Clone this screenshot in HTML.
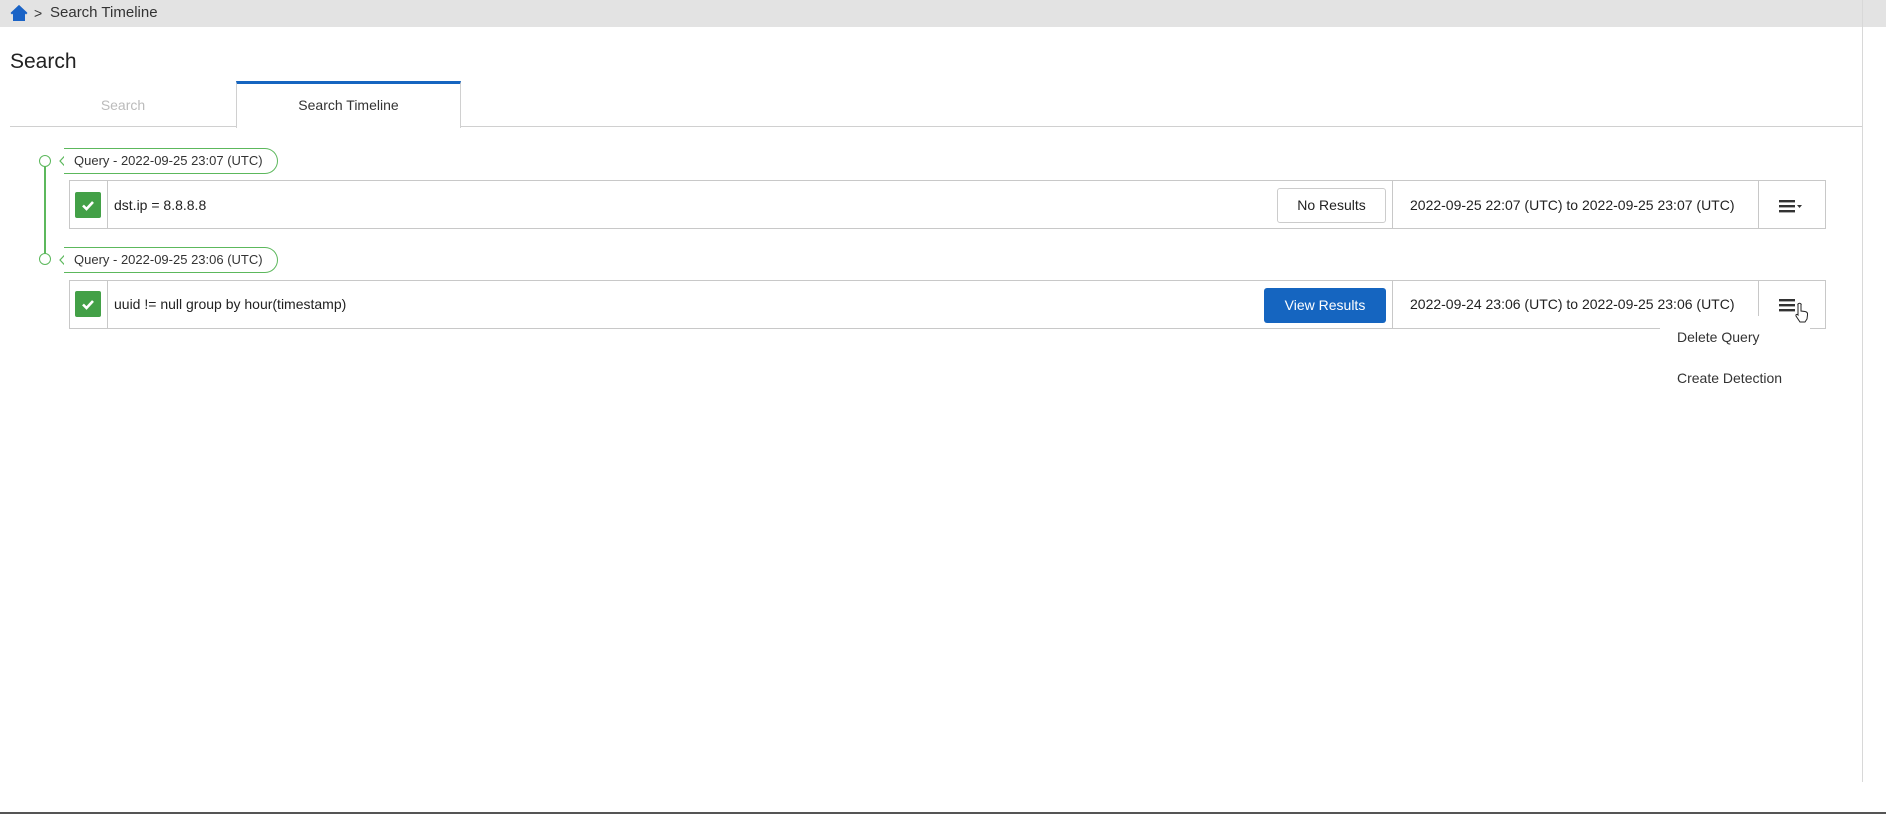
<!DOCTYPE html>
<html><head><meta charset="utf-8"><style>
*{box-sizing:border-box;margin:0;padding:0}
body{width:1886px;height:814px;background:#fff;font-family:"Liberation Sans",Arial,sans-serif;color:#222;position:relative;overflow:hidden}
.a{position:absolute}
.bar{left:0;top:0;width:1886px;height:27px;background:#e3e3e3}
.t{white-space:nowrap}
.row{border:1px solid #c8c8c8;background:#fff}
.vd{width:1px;background:#c8c8c8}
.chk{width:26px;height:26px;background:#43a047;border-radius:2px}
.pill{border:1px solid #5cb85c;border-radius:0 14px 14px 0;height:26px;font-size:13px;line-height:24px;padding-left:10px;color:#333;background:#fff}
</style></head><body>
<div class="a bar"></div>
<svg class="a" style="left:10px;top:4px" width="18" height="18" viewBox="0 0 18 18"><path d="M9 1 L1 8.5 L3 8.5 L3 17 L15 17 L15 8.5 L17 8.5 Z" fill="#1a63c6"/><path d="M9 1 L0.5 9 L2 10.5 L9 4 L16 10.5 L17.5 9 Z" fill="#1a63c6"/></svg>
<div class="a t" style="left:34px;top:5px;font-size:14px;color:#333">&gt;</div>
<div class="a t" style="left:50px;top:4px;font-size:15px;color:#333">Search Timeline</div>
<div class="a t" style="left:10px;top:50px;font-size:21px;color:#222">Search</div>
<div class="a" style="left:10px;top:126px;width:1852px;height:1px;background:#d0d0d0"></div>
<div class="a t" style="left:10px;top:97px;width:226px;text-align:center;font-size:14px;color:#bbb">Search</div>
<div class="a" style="left:236px;top:81px;width:225px;height:47px;background:#fff;border:1px solid #d0d0d0;border-top:3px solid #1565c0;border-bottom:none"></div>
<div class="a t" style="left:236px;top:97px;width:225px;text-align:center;font-size:14px;color:#333">Search Timeline</div>
<div class="a" style="left:44px;top:166px;width:2px;height:88px;background:#5cb85c"></div>
<div class="a" style="left:39px;top:155px;width:12px;height:12px;border:1.5px solid #5cb85c;border-radius:50%;background:#fff"></div>
<div class="a" style="left:39px;top:253px;width:12px;height:12px;border:1.5px solid #5cb85c;border-radius:50%;background:#fff"></div>
<svg class="a" style="left:56px;top:148px" width="12" height="26"><path d="M12.5 0.5 L12.5 4 L4 13 L12.5 22 L12.5 25.5" fill="#fff" stroke="#5cb85c" stroke-width="1.2"/></svg>
<div class="a pill t" style="left:64px;top:148px;width:214px;border-left:none">Query - 2022-09-25 23:07 (UTC)</div>
<svg class="a" style="left:56px;top:247px" width="12" height="26"><path d="M12.5 0.5 L12.5 4 L4 13 L12.5 22 L12.5 25.5" fill="#fff" stroke="#5cb85c" stroke-width="1.2"/></svg>
<div class="a pill t" style="left:64px;top:247px;width:214px;border-left:none">Query - 2022-09-25 23:06 (UTC)</div>
<div class="a row" style="left:69px;top:180px;width:1757px;height:49px"></div>
<div class="a chk" style="left:75px;top:192px"></div>
<svg class="a" style="left:75px;top:192px" width="26" height="26"><path d="M8 13.5 L11.5 17 L18 10" fill="none" stroke="#fff" stroke-width="2.6"/></svg>
<div class="a vd" style="left:107px;top:180px;height:49px"></div>
<div class="a t" style="left:114px;top:197px;font-size:14px">dst.ip = 8.8.8.8</div>
<div class="a" style="left:1277px;top:188px;width:109px;height:35px;border:1px solid #ccc;border-radius:3px"></div>
<div class="a t" style="left:1277px;top:197px;width:109px;text-align:center;font-size:14px">No Results</div>
<div class="a vd" style="left:1392px;top:180px;height:49px"></div>
<div class="a t" style="left:1410px;top:197px;font-size:14px">2022-09-25 22:07 (UTC) to 2022-09-25 23:07 (UTC)</div>
<div class="a vd" style="left:1758px;top:180px;height:49px"></div>
<svg class="a" style="left:1779px;top:198px" width="26" height="16"><rect x="0" y="2" width="16" height="2.4" fill="#333"/><rect x="0" y="7" width="16" height="2.4" fill="#333"/><rect x="0" y="12" width="16" height="2.4" fill="#333"/><path d="M18 7 L23 7 L20.5 10 Z" fill="#333"/></svg>
<div class="a row" style="left:69px;top:280px;width:1757px;height:49px"></div>
<div class="a chk" style="left:75px;top:291px"></div>
<svg class="a" style="left:75px;top:291px" width="26" height="26"><path d="M8 13.5 L11.5 17 L18 10" fill="none" stroke="#fff" stroke-width="2.6"/></svg>
<div class="a vd" style="left:107px;top:280px;height:49px"></div>
<div class="a t" style="left:114px;top:296px;font-size:14px">uuid != null group by hour(timestamp)</div>
<div class="a" style="left:1264px;top:288px;width:122px;height:35px;background:#1565c0;border-radius:3px"></div>
<div class="a t" style="left:1264px;top:297px;width:122px;text-align:center;font-size:14px;color:#fff">View Results</div>
<div class="a vd" style="left:1392px;top:280px;height:49px"></div>
<div class="a t" style="left:1410px;top:296px;font-size:14px">2022-09-24 23:06 (UTC) to 2022-09-25 23:06 (UTC)</div>
<div class="a vd" style="left:1758px;top:280px;height:49px"></div>
<div class="a" style="left:1660px;top:316px;width:150px;height:100px;background:#fff"></div>
<svg class="a" style="left:1779px;top:297px" width="26" height="16"><rect x="0" y="2" width="16" height="2.4" fill="#333"/><rect x="0" y="7" width="16" height="2.4" fill="#333"/><rect x="0" y="12" width="16" height="2.4" fill="#333"/><path d="M18 7 L23 7 L20.5 10 Z" fill="#333"/></svg>
<svg class="a" style="left:1794px;top:302px" width="16" height="22"><path d="M4 2 Q5.5 0.5 7 2 L7 9 L11 9.5 Q14 10 13.5 13 L13 17 L11 20 L6 20 L2 14 Q1.5 12 3.5 12.5 L4 13 Z" fill="#fff" stroke="#222" stroke-width="1"/></svg>
<div class="a t" style="left:1677px;top:329px;font-size:14px;color:#333">Delete Query</div>
<div class="a t" style="left:1677px;top:370px;font-size:14px;color:#333">Create Detection</div>
<div class="a" style="left:1862px;top:0;width:1px;height:782px;background:#d8d8d8"></div>
<div class="a" style="left:0;top:812px;width:1886px;height:2px;background:#555"></div>
</body></html>
